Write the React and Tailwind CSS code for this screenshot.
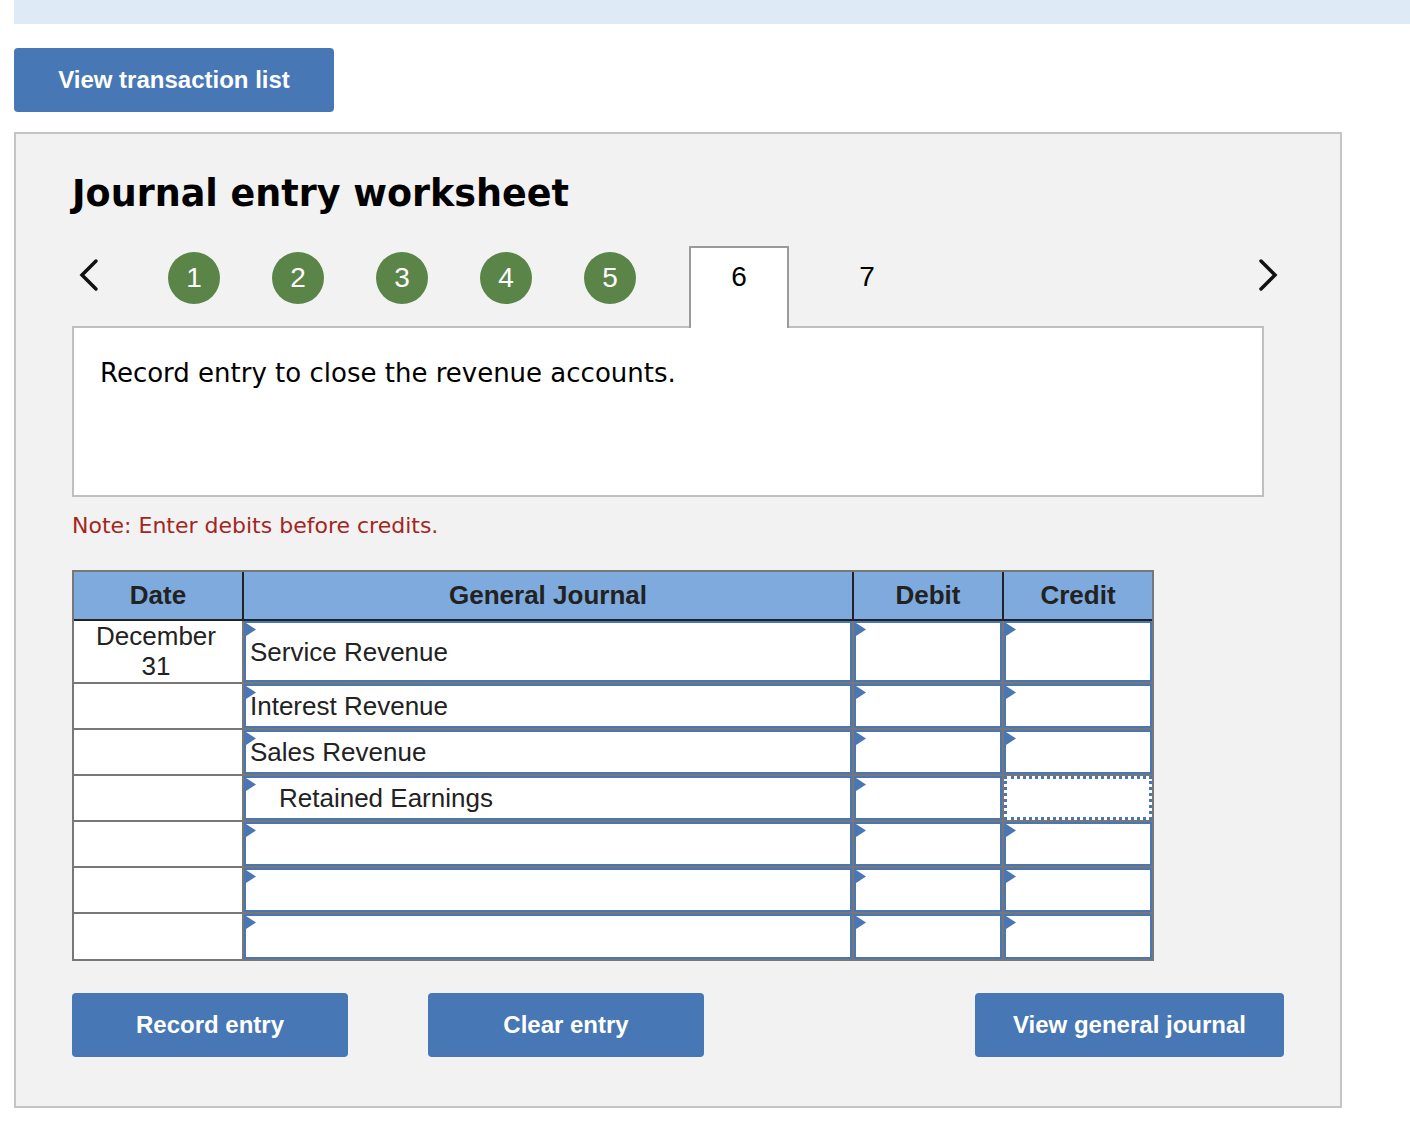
import React from "react";

const BLUE = "border-[#4a76b4]";

function Tri() {
  return (
    <svg className="absolute left-0 top-0" width="10" height="13" viewBox="0 0 10 13">
      <polygon points="0,0 10,6.5 0,13" fill="#4a76b4" />
    </svg>
  );
}

function InputCell({ w, children, focus, indent }) {
  return (
    <div className={`${w} h-full border-l-2 border-[#777] shrink-0`}>
      {focus ? (
        <div className="h-full w-full bg-white border-[3px] border-dotted border-[#4a76b4]" />
      ) : (
        <div className={`relative h-full w-full bg-white border-2 ${BLUE} flex items-center`}>
          <Tri />
          {children ? (
            <span className={`${indent ? "pl-[33px]" : "pl-[4px]"} text-[26px] leading-none text-[#222]`}>
              {children}
            </span>
          ) : null}
        </div>
      )}
    </div>
  );
}

function Row({ date, acct, indent, focusCredit, first, last }) {
  return (
    <div
      className={`flex ${first ? "h-[63px]" : last ? "h-[45px]" : "h-[46px]"} ${
        last ? "" : "border-b-2 border-[#777]"
      }`}
    >
      <div className="w-[168px] shrink-0 bg-white text-center pr-[4px] text-[26px] leading-[30px] text-[#222]">
        {date ? (
          <>
            <div>{date[0]}</div>
            <div>{date[1]}</div>
          </>
        ) : null}
      </div>
      <InputCell w="w-[610px]" indent={indent}>
        {acct}
      </InputCell>
      <InputCell w="w-[150px]" />
      <InputCell w="w-[150px]" focus={focusCredit} />
    </div>
  );
}

function Chevron({ dir }) {
  return (
    <svg width="20" height="34" viewBox="0 0 20 34" className="shrink-0">
      <polyline
        points={dir === "left" ? "17,3 3,17 17,31" : "3,3 17,17 3,31"}
        fill="none"
        stroke="#111"
        strokeWidth="3.5"
        strokeLinecap="round"
        strokeLinejoin="miter"
      />
    </svg>
  );
}

function Circle({ n, first }) {
  return (
    <div
      className={`${first ? "ml-[69px]" : "ml-[52px]"} mt-[6px] w-[52px] h-[52px] rounded-full bg-[#5a8448] text-white text-[28px] leading-none flex items-center justify-center shrink-0`}
    >
      {n}
    </div>
  );
}

function Btn({ children, className }) {
  return (
    <div
      className={`h-[64px] rounded-[4px] bg-[#4777b4] text-white font-bold text-[24px] flex items-center justify-center shrink-0 ${className}`}
    >
      {children}
    </div>
  );
}

export default function App() {
  const rows = [
    { date: ["December", "31"], acct: "Service Revenue", first: true },
    { acct: "Interest Revenue" },
    { acct: "Sales Revenue" },
    { acct: "Retained Earnings", indent: true, focusCredit: true },
    {},
    {},
    { last: true },
  ];
  return (
    <div className="min-h-[1126px] w-[1410px] bg-white font-['Liberation_Sans',Arial,sans-serif] overflow-hidden">
      <div className="ml-[14px] h-[24px] bg-[#deebf7]" />
      <Btn className="ml-[14px] mt-[24px] w-[320px]">View transaction list</Btn>

      <div className="ml-[14px] mt-[20px] w-[1328px] bg-[#f2f2f2] border-2 border-[#c4c4c4] pl-[56px] pb-[49px]">
        <h1 className="mt-[42px] h-[36px] font-['DejaVu_Sans',Verdana,sans-serif] font-bold text-[36.5px] leading-[36px] text-black">
          Journal entry worksheet
        </h1>

        <div className="mt-[34px] h-[80px] flex items-start">
          <div className="ml-[7px] mt-[12px]">
            <Chevron dir="left" />
          </div>
          <Circle n="1" first />
          <Circle n="2" />
          <Circle n="3" />
          <Circle n="4" />
          <Circle n="5" />
          <div className="ml-[53px] relative z-10 w-[100px] h-[82px] bg-white border-2 border-b-0 border-[#9a9a9a] flex justify-center pt-[15px] text-[28px] leading-none text-black shrink-0">
            6
          </div>
          <div className="ml-[28px] w-[100px] h-[80px] border-2 border-transparent flex justify-center pt-[15px] text-[28px] leading-none text-black shrink-0">
            7
          </div>
          <div className="ml-[341px] mt-[12px]">
            <Chevron dir="right" />
          </div>
        </div>

        <div className="w-[1192px] h-[171px] bg-white border-2 border-[#bfbfbf] pl-[26px] pt-[32px]">
          <p className="font-['DejaVu_Sans',Verdana,sans-serif] text-[26px] leading-none text-black">
            Record entry to close the revenue accounts.
          </p>
        </div>

        <p className="mt-[18px] font-['DejaVu_Sans',Verdana,sans-serif] text-[22px] leading-none text-[#a3261e]">
          Note: Enter debits before credits.
        </p>

        <div className="mt-[33px] w-[1082px] border-2 border-[#777]">
          <div className="flex h-[49px] bg-[#7eaadd] border-b-2 border-[#222] font-bold text-[26px] text-[#222]">
            <div className="w-[168px] shrink-0 flex items-center justify-center">Date</div>
            <div className="w-[610px] shrink-0 border-l-2 border-[#222] flex items-center justify-center">
              General Journal
            </div>
            <div className="w-[150px] shrink-0 border-l-2 border-[#222] flex items-center justify-center">
              Debit
            </div>
            <div className="w-[150px] shrink-0 border-l-2 border-[#222] flex items-center justify-center">
              Credit
            </div>
          </div>
          {rows.map((r, i) => (
            <Row key={i} {...r} />
          ))}
        </div>

        <div className="mt-[32px] flex">
          <Btn className="w-[276px]">Record entry</Btn>
          <Btn className="ml-[80px] w-[276px]">Clear entry</Btn>
          <Btn className="ml-[271px] w-[309px]">View general journal</Btn>
        </div>
      </div>
    </div>
  );
}
